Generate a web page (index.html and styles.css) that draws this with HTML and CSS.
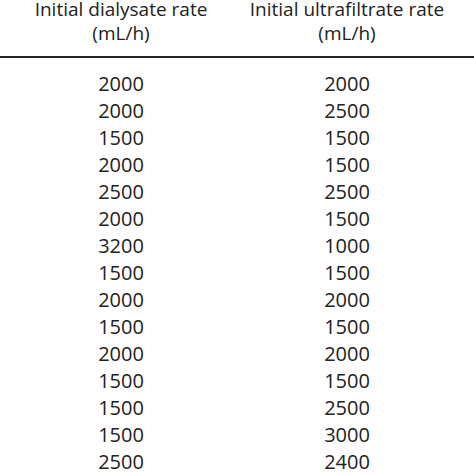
FILE: index.html
```html
<!DOCTYPE html>
<html>
<head>
<meta charset="utf-8">
<link rel="stylesheet" href="styles.css">
</head>
<body>
<div class="table">
  <div class="head">
    <div class="cell">Initial dialysate rate<br>(mL/h)</div>
    <div class="cell">Initial ultrafiltrate rate<br>(mL/h)</div>
  </div>
  <div class="body">
    <div class="cell">2000</div><div class="cell">2000</div>
    <div class="cell">2000</div><div class="cell">2500</div>
    <div class="cell">1500</div><div class="cell">1500</div>
    <div class="cell">2000</div><div class="cell">1500</div>
    <div class="cell">2500</div><div class="cell">2500</div>
    <div class="cell">2000</div><div class="cell">1500</div>
    <div class="cell">3200</div><div class="cell">1000</div>
    <div class="cell">1500</div><div class="cell">1500</div>
    <div class="cell">2000</div><div class="cell">2000</div>
    <div class="cell">1500</div><div class="cell">1500</div>
    <div class="cell">2000</div><div class="cell">2000</div>
    <div class="cell">1500</div><div class="cell">1500</div>
    <div class="cell">1500</div><div class="cell">2500</div>
    <div class="cell">1500</div><div class="cell">3000</div>
    <div class="cell">2500</div><div class="cell">2400</div>
  </div>
</div>
</body>
</html>
```
FILE: styles.css
```css
html, body {
  margin: 0;
  padding: 0;
  background: #ffffff;
  overflow: hidden;
}
.table {
  margin-top: -3px;
  font-family: "Open Sans", "Noto Sans", sans-serif;
  color: #222222;
}
.head {
  display: grid;
  grid-template-columns: 226px 226px;
  padding-left: 8px;
  font-size: 19px;
  line-height: 24px;
  padding-bottom: 11px;
  border-bottom: 2px solid #222222;
}
.cell {
  text-align: center;
}
.body {
  display: grid;
  grid-template-columns: 226px 226px;
  padding-left: 8px;
  padding-top: 12px;
  font-size: 20px;
  line-height: 27px;
}
```
